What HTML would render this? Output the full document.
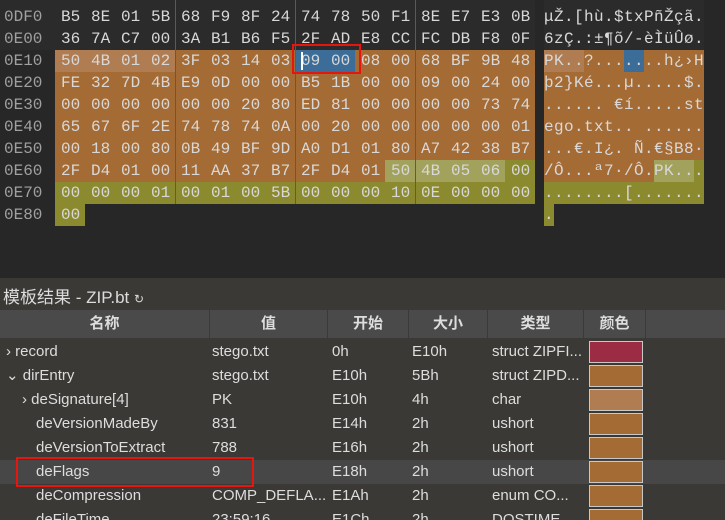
<!DOCTYPE html>
<html><head><meta charset="utf-8">
<style>
*{margin:0;padding:0;box-sizing:border-box}
body{width:725px;height:520px;overflow:hidden;background:#272727;position:relative;font-family:"Liberation Sans","Noto Sans CJK SC",sans-serif}
#hex div{position:absolute}
.a{color:#a0a0a0;font:16px "Liberation Mono",monospace;line-height:22px}
.b{font:16px "Liberation Mono",monospace;line-height:22px;color:#d8d8d8;height:22px}
.sep{position:absolute;top:0;width:1px;height:204px;background:#5a5a5a}
#panel{position:absolute;left:0;top:278px;width:725px;height:242px;background:#3a3936;overflow:hidden}
.title{position:absolute;left:3px;top:5px;color:#dcdcdc;font-size:17px}
.hdr{position:absolute;top:32px;height:28px;background:#4a4a4a;color:#ddd;font-weight:bold;font-size:15px;line-height:28px;text-align:center;border-right:1px solid #3a3a3a}
.row{position:absolute;left:0;width:725px;height:24px;color:#ddd;font-size:15px;line-height:24px}
.row span{position:absolute;white-space:nowrap}
.sw{position:absolute;left:589px;width:54px;height:22px;border:1px solid #c8c8c8;top:1px}
</style></head><body>
<div id="hex"></div>
<div class="sep" style="left:175px"></div>
<div class="sep" style="left:295px"></div>
<div class="sep" style="left:415px"></div>
<div style="position:absolute;left:292px;top:44px;width:69px;height:30px;border:2px solid #e8150f"></div>
<div style="position:absolute;left:301px;top:52px;width:2px;height:18px;background:#fff"></div>
<div id="panel">
<div class="title">模板结果 - ZIP.bt <span style="font-size:12px">&#x21bb;</span></div>
<div class="hdr" style="left:0;width:210px">名称</div>
<div class="hdr" style="left:210px;width:118px">值</div>
<div class="hdr" style="left:328px;width:81px">开始</div>
<div class="hdr" style="left:409px;width:79px">大小</div>
<div class="hdr" style="left:488px;width:96px">类型</div>
<div class="hdr" style="left:584px;width:62px">颜色</div>
<div class="hdr" style="left:646px;width:79px;border:none"></div>
<div id="rows"></div>
</div>
<script>
var rows=[
["0DF0","B5 8E 01 5B 68 F9 8F 24 74 78 50 F1 8E E7 E3 0B","μŽ.[hù.$txPñŽçã."],
["0E00","36 7A C7 00 3A B1 B6 F5 2F AD E8 CC FC DB F8 0F","6zÇ.:±¶õ/-èÌüÛø."],
["0E10","50 4B 01 02 3F 03 14 03 09 00 08 00 68 BF 9B 48","PK..?.......h¿›H"],
["0E20","FE 32 7D 4B E9 0D 00 00 B5 1B 00 00 09 00 24 00","þ2}Ké...µ.....$."],
["0E30","00 00 00 00 00 00 20 80 ED 81 00 00 00 00 73 74","...... €í.....st"],
["0E40","65 67 6F 2E 74 78 74 0A 00 20 00 00 00 00 00 01","ego.txt.. ......"],
["0E50","00 18 00 80 0B 49 BF 9D A0 D1 01 80 A7 42 38 B7","...€.I¿. Ñ.€§B8·"],
["0E60","2F D4 01 00 11 AA 37 B7 2F D4 01 50 4B 05 06 00","/Ô...ª7·/Ô.PK..."],
["0E70","00 00 00 01 00 01 00 5B 00 00 00 10 0E 00 00 00","........[......."],
["0E80","00","."]];
function col(r,i){
 if(r<2)return null;
 if(r==2&&i<4)return"#b07d52";
 if(r==2&&(i==8||i==9))return"#3c6d99";
 if(r==7&&i>=11&&i<=14)return"#a3a25c";
 if(r==7&&i>=11)return"#8c8a2e";
 if(r>=8)return"#8c8a2e";
 return"#a56b34";}
var h="";
h+='<div style="left:0;top:0;width:535px;height:50px;background:#2b2b2b"></div>';
h+='<div style="left:544px;top:0;width:160px;height:50px;background:#2b2b2b"></div>';
h+='<div class="a" style="left:4px;top:-16px">0DE0</div>';
rows.forEach(function(R,r){var top=6+22*r;
 h+='<div class="a" style="left:4px;top:'+top+'px">'+R[0]+'</div>';
 var bs=R[1].split(" ");var cs=Array.from(R[2]);
 bs.forEach(function(b,i){var c=col(r,i);var x=55+30*i;
  h+='<div class="b" style="left:'+x+'px;top:'+top+'px;width:30px;'+(c?'background:'+c+';':'')+'padding-left:6px">'+b+'</div>';
  var ch=cs[i]; if(ch==" ")ch="&nbsp;";
  h+='<div class="b" style="left:'+(544+10*i)+'px;top:'+top+'px;width:10px;'+(c?'background:'+c+';':'')+'">'+ch+'</div>';
 });
});
document.getElementById("hex").innerHTML=h;
var t=[
["› record","stego.txt","0h","E10h","struct ZIPFI...","#9b2c44",0,0],
["⌄ dirEntry","stego.txt","E10h","5Bh","struct ZIPD...","#a56b34",0,0],
["› deSignature[4]","PK","E10h","4h","char","#b07d52",1,0],
["deVersionMadeBy","831","E14h","2h","ushort","#a56b34",2,0],
["deVersionToExtract","788","E16h","2h","ushort","#a56b34",2,0],
["deFlags","9","E18h","2h","ushort","#a56b34",2,1],
["deCompression","COMP_DEFLA...","E1Ah","2h","enum CO...","#a56b34",2,0],
["deFileTime","23:59:16","E1Ch","2h","DOSTIME","#a56b34",2,0]];
var s="";
t.forEach(function(R,i){var top=62+24*i;
 var lx=R[6]==0?6:(R[6]==1?22:36);
 s+='<div class="row" style="top:'+top+'px;'+(R[7]?'background:#474747;':'')+'">'+
 '<span style="left:'+lx+'px">'+R[0]+'</span><span style="left:212px">'+R[1]+'</span><span style="left:332px">'+R[2]+'</span><span style="left:412px">'+R[3]+'</span><span style="left:492px">'+R[4]+'</span><div class="sw" style="background:'+R[5]+'"></div></div>';
});
s+='<div style="position:absolute;left:16px;top:179px;width:238px;height:30px;border:2px solid #e8150f"></div>';
document.getElementById("rows").innerHTML=s;
</script>
</body></html>
